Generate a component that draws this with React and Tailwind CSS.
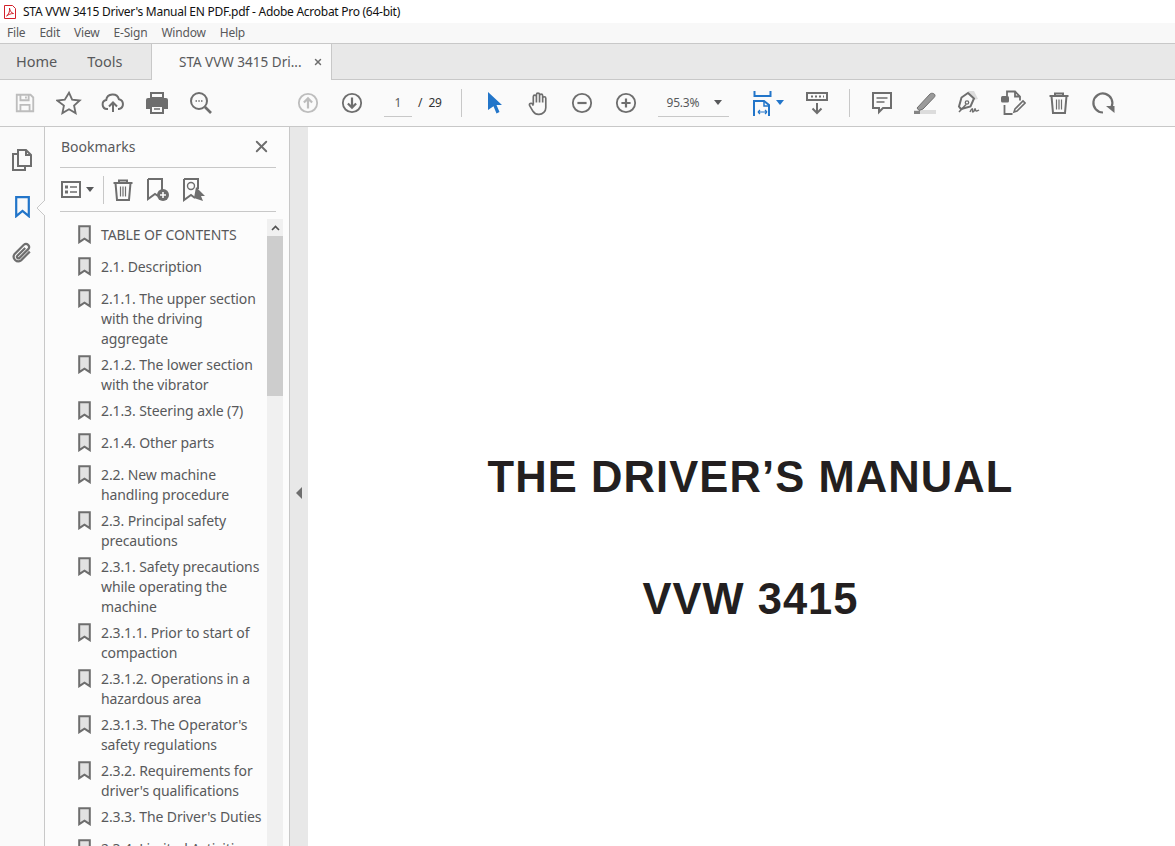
import React from "react";
import { X } from "lucide-react";

const bookmarks = [
  ["TABLE OF CONTENTS"],
  ["2.1. Description"],
  ["2.1.1. The upper section", "with the driving", "aggregate"],
  ["2.1.2. The lower section", "with the vibrator"],
  ["2.1.3. Steering axle (7)"],
  ["2.1.4. Other parts"],
  ["2.2. New machine", "handling procedure"],
  ["2.3. Principal safety", "precautions"],
  ["2.3.1. Safety precautions", "while operating the", "machine"],
  ["2.3.1.1. Prior to start of", "compaction"],
  ["2.3.1.2. Operations in a", "hazardous area"],
  ["2.3.1.3. The Operator's", "safety regulations"],
  ["2.3.2. Requirements for", "driver's qualifications"],
  ["2.3.3. The Driver's Duties"],
  ["2.3.4. Limited Activities"],
];

const Icon = ({ children, size = 24, box = 24, className = "text-[#6e6e6e]" }) => (
  <svg width={size} height={size} viewBox={`0 0 ${box} ${box}`} fill="none" stroke="currentColor" strokeWidth="2" className={className}>
    {children}
  </svg>
);

const Slot = ({ children, className = "w-[44px]" }) => (
  <div className={`flex h-full shrink-0 items-center justify-center ${className}`}>{children}</div>
);

const Divider = () => <div className="h-[28px] w-px shrink-0 bg-[#c8c8c8]" />;

const Caret = ({ className = "text-[#6e6e6e]" }) => (
  <svg width="8" height="5" viewBox="0 0 8 5" className={className}>
    <path d="M0 0h8L4 5z" fill="currentColor" />
  </svg>
);

const TrashIcon = () => (
  <Icon>
    <path d="M2.5 5h19M8 5V2.5h8V5M4.5 5l1.5 17h12l1.5-17" />
    <path d="M9.5 8.5v10M12 8.5v10M14.5 8.5v10" strokeWidth="1.2" />
  </Icon>
);

const BookmarkRow = ({ lines }) => (
  <div className="flex min-h-[32px] items-start pt-[4px] pb-[2px] pl-[33px]">
    <svg width="13" height="19" viewBox="0 0 13 19" className="shrink-0">
      <path d="M1.2 1.2h10.6v16l-5.3-3.6-5.3 3.6z" fill="#e2e2e2" stroke="#6e6e6e" strokeWidth="2" />
    </svg>
    <div className="ml-[10px] text-[14px] leading-[20px] tracking-[-0.1px] whitespace-nowrap text-[#58595b]">
      {lines.map((line, index) => (
        <div key={index}>{line}</div>
      ))}
    </div>
  </div>
);

const Toolbar = () => (
  <div className="flex h-[47px] shrink-0 items-center border-b border-[#c8c8c8] bg-[#fafafa] pl-[3px]">
    <Slot>
      <Icon size={22} className="text-[#bdbdbd]">
        <path d="M3 3h15l3 3v15H3z" />
        <path d="M7 3v6h9V3M13 5v2M7 21v-7h10v7" />
      </Icon>
    </Slot>
    <Slot>
      <Icon size={26}>
        <path d="M12 2.5l2.9 6.4 7 .8-5.2 4.7 1.4 6.9-6.1-3.5-6.1 3.5 1.4-6.9L1.100 9.700l7-.8z" strokeWidth="1.700" />
      </Icon>
    </Slot>
    <Slot>
      <Icon size={24}>
        <path d="M7 18H6a4.500 4.500 0 0 1-.8-8.900 6.500 6.500 0 0 1 12.700-.9A5 5 0 0 1 18 18h-1" />
        <path d="M12 21v-9M8 15.500l4-4 4 4" />
      </Icon>
    </Slot>
    <Slot>
      <svg width="24" height="24" viewBox="0 0 24 24" className="text-[#6e6e6e]">
        <path d="M6 2h12v5H6z" fill="none" stroke="currentColor" strokeWidth="2" />
        <path d="M3 7h18a2 2 0 0 1 2 2v9h-4v-4H5v4H1V9a2 2 0 0 1 2-2z" fill="currentColor" />
        <path d="M6 15h12v7H6z" fill="none" stroke="currentColor" strokeWidth="2" />
        <path d="M9 18h6" stroke="currentColor" strokeWidth="1.500" />
      </svg>
    </Slot>
    <Slot>
      <Icon size={24}>
        <circle cx="10" cy="10" r="8" />
        <path d="M16 16l6 6" strokeWidth="2.600" />
        <path d="M6.500 10h1.500M9.300 10h1.500M12 10h1.500" strokeWidth="1.600" />
      </Icon>
    </Slot>
    <div className="w-[63px] shrink-0" />
    <Slot>
      <Icon size={22} className="text-[#bdbdbd]">
        <circle cx="12" cy="12" r="10" />
        <path d="M12 18V7M7.500 11.500L12 7l4.500 4.500" strokeWidth="2.400" />
      </Icon>
    </Slot>
    <Slot>
      <Icon size={22}>
        <circle cx="12" cy="12" r="10" />
        <path d="M12 6v11M7.500 12.500L12 17l4.500-4.500" strokeWidth="2.400" />
      </Icon>
    </Slot>
    <div className="ml-[10px] flex h-[28px] w-[28px] shrink-0 items-center justify-center border-b border-[#c8c8c8] text-[12px] text-[#58595b]">1</div>
    <span className="ml-[6px] text-[12px] text-[#333]">/</span>
    <span className="ml-[6px] w-[33px] text-[12px] tracking-[-0.3px] text-[#333]">29</span>
    <Divider />
    <Slot className="ml-[11px] w-[43px]">
      <svg width="14" height="22" viewBox="0 0 14 22" className="text-[#2275c9]">
        <path d="M0 0l14 13H8.500l3 7-3 1.500-3-7.200L0 18z" fill="currentColor" />
      </svg>
    </Slot>
    <Slot>
      <Icon size={25}>
        <path d="M7 13V5.500a1.500 1.500 0 0 1 3 0V11V3.500a1.500 1.500 0 0 1 3 0V11V4.500a1.500 1.500 0 0 1 3 0V11V7a1.500 1.500 0 0 1 3 0v9a6.500 6.500 0 0 1-6.500 6.500H12c-2.500 0-4-1-5.300-3L3.500 14c-1-1.800 1.500-3 2.700-1.500L7 14" strokeWidth="1.600" />
      </Icon>
    </Slot>
    <Slot>
      <Icon size={22}>
        <circle cx="12" cy="12" r="10" />
        <path d="M7 12h10" strokeWidth="2.400" />
      </Icon>
    </Slot>
    <Slot>
      <Icon size={22}>
        <circle cx="12" cy="12" r="10" />
        <path d="M7 12h10M12 7v10" strokeWidth="2.400" />
      </Icon>
    </Slot>
    <div className="ml-[10px] flex h-[28px] w-[71px] shrink-0 items-center border-b border-[#c8c8c8] pl-[8px] text-[12px] tracking-[-0.2px] text-[#58595b]">
      95.3%
      <Caret className="ml-auto mr-[7px] text-[#58595b]" />
    </div>
    <div className="ml-[24px] flex h-full w-[32px] shrink-0 items-center">
      <svg width="20" height="25" viewBox="0 0 20 25" className="text-[#2275c9]">
        <path d="M1.500 0v5h16V0M1 25V10h10l5 4v11" fill="none" stroke="currentColor" strokeWidth="2" />
        <path d="M11 10v5h5" fill="none" stroke="currentColor" strokeWidth="1.500" />
        <path d="M5 21h9M5 21l2-2M5 21l2 2M14 21l-2-2M14 21l-2 2" stroke="currentColor" strokeWidth="1.200" fill="none" />
      </svg>
      <Caret className="-mt-[2px] ml-[3px] text-[#2275c9]" />
    </div>
    <Slot className="ml-[10px] w-[44px]">
      <svg width="22" height="24" viewBox="0 0 22 24" className="text-[#6e6e6e]">
        <path d="M1 2h20v7H1z" fill="none" stroke="currentColor" strokeWidth="2" />
        <path d="M5 5.500h2M9 5.500h2M13 5.500h2M17 5.500h1" stroke="currentColor" strokeWidth="2" />
        <path d="M11 12v10M6.500 17.500L11 22l4.500-4.500" fill="none" stroke="currentColor" strokeWidth="2" />
      </svg>
    </Slot>
    <div className="w-[10px] shrink-0" />
    <Divider />
    <Slot className="ml-[11px] w-[42px]">
      <svg width="20" height="24" viewBox="0 0 20 24" className="text-[#6e6e6e]">
        <path d="M1 2h18v15h-8l-4 4v-4H1z" fill="none" stroke="currentColor" strokeWidth="2" />
        <path d="M4.500 7h11M4.500 11h8" stroke="currentColor" strokeWidth="1.300" />
      </svg>
    </Slot>
    <Slot>
      <svg width="24" height="24" viewBox="0 0 24 24" className="text-[#6e6e6e]">
        <path d="M1 19h22v4H1z" fill="#dcdcdc" />
        <path d="M4 17L17 3c1.500-1.500 5-.500 5 1.500 0 .800-.300 1.200-1 2L10 18l-4 1.500z" fill="#9a9a9a" stroke="currentColor" strokeWidth="1" />
        <path d="M1 20h6v3H1z" fill="currentColor" opacity="0.800" />
      </svg>
    </Slot>
    <Slot>
      <svg width="24" height="24" viewBox="0 0 24 24" className="text-[#6e6e6e]" fill="none" stroke="currentColor">
        <path d="M11 0h6l4 8-4 1z" fill="#dcdcdc" stroke="none" />
        <path d="M11 2l6 5.500-3.500 8L4 18l-2-2.500 2.500-9z" strokeWidth="2" />
        <path d="M2 21l7-7.500" strokeWidth="1.600" />
        <circle cx="10" cy="11.500" r="1.700" strokeWidth="1.300" />
        <path d="M13 21c1.500-4 3-4 2.500-1.500s1.500 1.500 2-.5 1-1 1 0 1.500 1.500 3.500 0" strokeWidth="1.400" />
      </svg>
    </Slot>
    <Slot>
      <svg width="26" height="26" viewBox="0 0 26 26" className="text-[#6e6e6e]" fill="none" stroke="currentColor" strokeWidth="1.800">
        <rect x="1" y="6" width="8" height="6.500" rx="1.500" fill="currentColor" stroke="none" />
        <path d="M7 6V1.500h8l5 5v4M15 1.500v5h5M4.500 15v9h8" />
        <path d="M14 22l1-3 8-8 2 2-8 8z" strokeWidth="1.600" />
      </svg>
    </Slot>
    <Slot className="ml-[2px] w-[44px]">
      <TrashIcon />
    </Slot>
    <Slot>
      <Icon size={24}>
        <path d="M20.500 16A9.500 9.500 0 1 0 12 21.500" strokeWidth="2.200" />
        <path d="M15 15h8.500v7z" fill="currentColor" stroke="none" />
      </Icon>
    </Slot>
  </div>
);

const Rail = () => (
  <div className="relative flex w-[45px] shrink-0 flex-col items-center border-r border-[#c8c8c8] bg-[#fafafa] pt-[22px]">
    <svg width="20" height="22" viewBox="0 0 20 22" className="text-[#6e6e6e]" fill="none" stroke="currentColor" strokeWidth="2">
      <path d="M6 1h8l5 5v11H6zM14 1v5h5" />
      <path d="M6 5H1v16h12v-4" />
    </svg>
    <svg width="15" height="22" viewBox="0 0 15 22" className="mt-[25px] text-[#2275c9]" fill="none" stroke="currentColor" strokeWidth="2.200">
      <path d="M1.200 1.200h12.600v19L7.500 15l-6.300 5.200z" />
    </svg>
    <svg width="22" height="22" viewBox="0 0 24 24" className="mt-[24px] text-[#6e6e6e]" fill="none" stroke="currentColor" strokeWidth="2.400">
      <path d="M20.500 10.500l-9.500 9.500a5 5 0 0 1-7-7l10-10a3.400 3.400 0 0 1 4.800 4.800l-9.500 9.500a1.500 1.500 0 0 1-2.300-2.300l8.500-8.500" />
    </svg>
    <div className="absolute top-[73px] -right-px h-[16px] w-[9px]">
      <svg width="9" height="16" viewBox="0 0 9 16">
        <path d="M9 0L1 8l8 8" fill="#fcfcfc" stroke="#c8c8c8" />
      </svg>
    </div>
  </div>
);

const BookmarksPanel = () => (
  <div className="flex w-[245px] shrink-0 flex-col overflow-hidden border-r border-[#c8c8c8] bg-[#fcfcfc]">
    <div className="mx-[15px] flex h-[41px] w-[216px] shrink-0 items-center justify-between border-b border-[#c8c8c8] pb-[2px] pl-px text-[14px] text-[#58595b]">
      Bookmarks
      <X size={19} strokeWidth={2.4} className="mr-[5px] text-[#6e6e6e]" />
    </div>
    <div className="mx-[15px] flex h-[44px] w-[216px] shrink-0 items-center border-b border-[#c8c8c8] pl-px">
      <svg width="20" height="17" viewBox="0 0 20 17" className="text-[#6e6e6e]">
        <path d="M1 1h18v15H1z" fill="none" stroke="currentColor" strokeWidth="2" />
        <path d="M4 4.500h3v3H4zM4 9.500h3v3H4z" fill="currentColor" />
        <path d="M9 6h7M9 11h7" stroke="currentColor" strokeWidth="1.500" />
      </svg>
      <Caret className="ml-[5px]" />
      <div className="ml-[9px] h-[28px] w-px bg-[#c8c8c8]" />
      <div className="ml-[7px] flex">
        <TrashIcon />
      </div>
      <svg width="24" height="24" viewBox="0 0 24 24" className="ml-[11px] text-[#6e6e6e]">
        <path d="M2 1h14v11M2 1v20l7-5 3 2" fill="none" stroke="currentColor" strokeWidth="2" />
        <circle cx="17" cy="17" r="6" fill="currentColor" />
        <path d="M14 17h6M17 14v6" stroke="#fcfcfc" strokeWidth="1.600" />
      </svg>
      <svg width="24" height="24" viewBox="0 0 24 24" className="ml-[12px] text-[#6e6e6e]">
        <path d="M2 1h14v10M2 1v21l7-5 4 3" fill="none" stroke="currentColor" strokeWidth="2" />
        <circle cx="9" cy="8" r="3.500" fill="none" stroke="currentColor" strokeWidth="1.400" />
        <path d="M14 9l9 9h-4l2 5-9-3z" fill="currentColor" />
      </svg>
    </div>
    <div className="flex min-h-0 flex-1 pt-[7px]">
      <div className="w-[222px] shrink-0 overflow-hidden pt-[2px]">
        {bookmarks.map((lines, index) => (
          <BookmarkRow key={index} lines={lines} />
        ))}
      </div>
      <div className="flex w-[16px] shrink-0 flex-col bg-[#f0f0f0]">
        <div className="flex h-[17px] shrink-0 items-center justify-center">
          <svg width="9" height="6" viewBox="0 0 9 6" className="text-[#505050]">
            <path d="M1 5l3.500-3.500L8 5" fill="none" stroke="currentColor" strokeWidth="1.600" />
          </svg>
        </div>
        <div className="h-[160px] shrink-0 bg-[#cdcdcd]" />
        <div className="mt-auto -mb-[14px] flex h-[17px] shrink-0 items-center justify-center">
          <svg width="9" height="6" viewBox="0 0 9 6" className="text-[#505050]">
            <path d="M1 1l3.500 3.500L8 1" fill="none" stroke="currentColor" strokeWidth="1.600" />
          </svg>
        </div>
      </div>
    </div>
  </div>
);

const Splitter = () => (
  <div className="flex w-[18px] shrink-0 items-center justify-center bg-[#e8e8e8]">
    <svg width="6" height="12" viewBox="0 0 6 12" className="mt-[13px] text-[#6e6e6e]">
      <path d="M6 0v12L0 6z" fill="currentColor" />
    </svg>
  </div>
);

const App = () => {
  return (
    <div className="flex h-[846px] w-[1175px] flex-col overflow-hidden bg-white font-['Noto_Sans',sans-serif] text-[#58595b]">
      <div className="flex h-[23px] shrink-0 items-center bg-white pl-[4px] text-[12px] tracking-[-0.27px] text-[#111]">
        <svg width="12" height="14" viewBox="0 0 12 14" className="shrink-0">
          <path d="M.5.500h8l3 3v10H.5z" fill="#fff" stroke="#d3202a" />
          <path d="M2.500 11c2-1 3.500-4.500 3-8 .3 3 2 5 4 5.500-2.500 0-5 1-7 2.500z" fill="none" stroke="#d3202a" />
        </svg>
        <span className="ml-[7px]">STA VVW 3415 Driver's Manual EN PDF.pdf - Adobe Acrobat Pro (64-bit)</span>
      </div>
      <div className="flex h-[20px] shrink-0 items-center gap-[14px] bg-[#f8f8f8] pl-[7px] text-[12px] tracking-[-0.2px]">
        <span>File</span>
        <span>Edit</span>
        <span>View</span>
        <span>E-Sign</span>
        <span>Window</span>
        <span>Help</span>
      </div>
      <div className="flex h-[37px] shrink-0 items-stretch border-y border-[#c8c8c8] bg-[#e8e8e8] text-[14.500px]">
        <div className="flex w-[152px] items-center gap-[30px] border-r border-[#c8c8c8] pl-[16px] text-[#58595b]">
          <span>Home</span>
          <span>Tools</span>
        </div>
        <div className="-mb-px flex w-[180px] items-center justify-between border-r border-[#c8c8c8] bg-[#fafafa] pl-[27px] pr-[8px] text-[13.500px]">
          <span>STA VVW 3415 Dri...</span>
          <X size={10} strokeWidth={3.500} className="text-[#6e6e6e]" />
        </div>
      </div>
      <Toolbar />
      <div className="flex min-h-0 flex-1">
        <Rail />
        <BookmarksPanel />
        <Splitter />
        <div className="flex flex-1 flex-col items-center bg-white pt-[325px] pl-[18px] font-['Liberation_Sans',sans-serif] font-bold text-[#231f20]">
          <div className="text-[43.500px] leading-[50px] tracking-[1.100px] whitespace-nowrap">THE DRIVER’S MANUAL</div>
          <div className="mt-[72px] text-[43.500px] leading-[50px] tracking-[1px] whitespace-nowrap">VVW 3415</div>
        </div>
      </div>
    </div>
  );
};

export default App;
